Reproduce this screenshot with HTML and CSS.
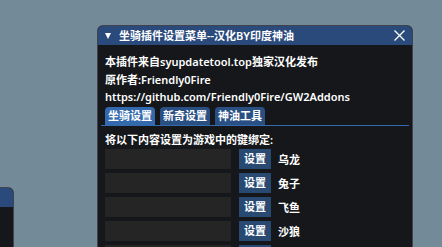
FILE: index.html
```html
<!DOCTYPE html>
<html lang="zh-CN">
<head>
<meta charset="utf-8">
<title>坐骑插件设置菜单</title>
<link rel="stylesheet" href="styles.css">
</head>
<body>
<div class="desktop">
  <div class="win win-side">
    <div class="titlebar"></div>
    <div class="win-body"></div>
  </div>

  <div class="win win-main">
    <div class="titlebar">
      <span class="collapse"></span>
      <span class="title">坐骑插件设置菜单--汉化BY印度神油</span>
      <svg class="close" width="11" height="11" viewBox="0 0 11 11"><path d="M0.5 0.5 L10.5 10.5 M10.5 0.5 L0.5 10.5" stroke="#fff" stroke-width="1.3" fill="none"/></svg>
    </div>
    <div class="win-body">
      <p class="line">本插件来自syupdatetool.top独家汉化发布</p>
      <p class="line">原作者:Friendly0Fire</p>
      <p class="line">https://github.com/Friendly0Fire/GW2Addons</p>
      <div class="tabs">
        <span class="tab active">坐骑设置</span>
        <span class="tab">新奇设置</span>
        <span class="tab">神油工具</span>
      </div>
      <p class="label">将以下内容设置为游戏中的键绑定:</p>
      <div class="rows">
        <div class="row"><span class="field"></span><span class="btn">设置</span><span class="name">乌龙</span></div>
        <div class="row"><span class="field"></span><span class="btn">设置</span><span class="name">兔子</span></div>
        <div class="row"><span class="field"></span><span class="btn">设置</span><span class="name">飞鱼</span></div>
        <div class="row"><span class="field"></span><span class="btn">设置</span><span class="name">沙狼</span></div>
        <div class="row"><span class="field"></span><span class="btn"></span></div>
      </div>
    </div>
  </div>
</div>
</body>
</html>
```

FILE: styles.css
```css
html, body {
  margin: 0;
  padding: 0;
}
body {
  background: #738b98;
  width: 442px;
  height: 247px;
  overflow: hidden;
  font-family: "Noto Sans", "Noto Sans CJK SC", sans-serif;
  font-size: 11px;
  font-weight: 600;
  color: #ffffff;
}
.desktop {
  position: relative;
  width: 442px;
  height: 247px;
  overflow: hidden;
}
.win {
  position: absolute;
  display: flex;
  flex-direction: column;
  border: 1px solid rgba(110, 110, 128, 0.5);
  border-radius: 6px;
  overflow: hidden;
  background: #15171a;
}
.win-side {
  left: -40px;
  top: 187px;
  width: 52px;
  height: 100px;
}
.win-main {
  left: 97px;
  top: 25px;
  width: 314px;
  height: 240px;
}
.titlebar {
  height: 19px;
  flex: none;
  background: #294a7a;
  display: flex;
  align-items: center;
  padding: 0 4px 0 7px;
}
.collapse {
  width: 0;
  height: 0;
  border-left: 3.5px solid transparent;
  border-right: 3.5px solid transparent;
  border-top: 6px solid #ffffff;
  margin-right: 8px;
}
.title {
  flex: 1;
  line-height: 19px;
}
.close {
  margin-right: 3px;
}
.win-body {
  flex: 1;
  padding: 8px 7px;
}
.line {
  margin: 0;
  line-height: 17.5px;
  white-space: nowrap;
}
.tabs {
  display: flex;
  gap: 5px;
  margin: 1.5px -4px 0;
  padding: 0 4px;
  border-bottom: 1px solid #3369ad;
}
.tab {
  width: 50px;
  height: 18px;
  line-height: 18px;
  text-align: center;
  background: #2a5083;
  border-radius: 4px 4px 0 0;
}
.tab.active {
  background: #3369ad;
}
.label {
  margin: 5px 0 1px;
  line-height: 17px;
}
.rows {
  display: flex;
  flex-direction: column;
  gap: 4px;
}
.row {
  display: flex;
  align-items: center;
  height: 20px;
}
.field {
  width: 126px;
  height: 20px;
  background: #252525;
}
.btn {
  width: 32px;
  height: 20px;
  line-height: 20px;
  text-align: center;
  background: #274972;
  margin-left: 8px;
}
.name {
  margin-left: 7px;
}
```
